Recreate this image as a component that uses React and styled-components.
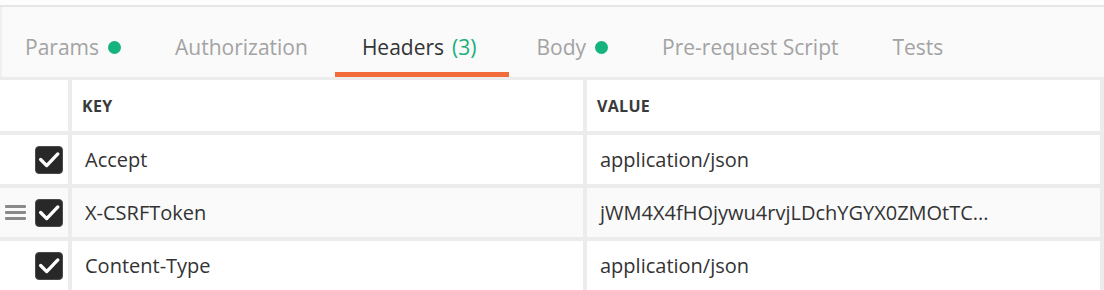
import React from 'react';
import styled, { createGlobalStyle } from 'styled-components';

const GlobalStyle = createGlobalStyle`
  html, body {
    margin: 0;
    padding: 0;
    background: #ffffff;
  }
  body {
    font-family: 'Open Sans', 'Liberation Sans', sans-serif;
    color: #333;
  }
  * {
    box-sizing: border-box;
  }
`;

const Page = styled.div`
  width: 1104px;
  height: 290px;
  overflow: hidden;
  background: #fdfdfd;
  padding-top: 5px;
`;

const TabBar = styled.div`
  display: flex;
  height: 72px;
  background: #fafafa;
  border-top: 2px solid #e6e6e6;
  box-shadow: inset 3px 0 3px -2px rgba(0, 0, 0, 0.08);
`;

const Tab = styled.div`
  display: flex;
  align-items: center;
  height: 70px;
  padding: 14px 27px 0;
  border-bottom: 5px solid ${(p) => (p.active ? '#f26b3a' : 'transparent')};
  font-size: 21px;
  color: ${(p) => (p.active ? '#333333' : '#a3a3a3')};
  white-space: nowrap;
  cursor: pointer;
  &:first-child {
    margin-left: -2px;
  }
`;

const Dot = styled.span`
  width: 13px;
  height: 13px;
  border-radius: 50%;
  background: #15b37d;
  margin-left: 9px;
  margin-top: 2px;
`;

const Count = styled.span`
  color: #18b07c;
  margin-left: 8px;
  margin-right: 6px;
`;

const Table = styled.div`
  display: grid;
  grid-template-columns: 68px 511px 1fr;
  grid-auto-rows: 49px;
  grid-template-rows: 51px;
  gap: 4px;
  background: #ececec;
  padding: 3px 4px 0 0;
`;

const Cell = styled.div`
  display: flex;
  align-items: center;
  background: ${(p) => (p.hover ? '#fafafa' : '#ffffff')};
  padding-left: 13px;
  font-size: 20px;
  color: #333;
  white-space: nowrap;
  overflow: hidden;
`;

const HeadCell = styled(Cell)`
  padding-left: 10px;
  font-size: 16px;
  font-weight: 700;
  letter-spacing: 0.3px;
  text-transform: uppercase;
  color: #3a3a3a;
`;

const ToggleCell = styled.div`
  display: flex;
  align-items: center;
  justify-content: flex-end;
  gap: 9px;
  padding-right: 5px;
  background: ${(p) => (p.hover ? '#fafafa' : '#ffffff')};
`;

const Handle = styled.div`
  display: flex;
  flex-direction: column;
  gap: 3px;
  width: 21px;
  span {
    display: block;
    height: 3px;
    border-radius: 1px;
    background: #8a8a8a;
  }
`;

const CheckBox = styled.div`
  width: 28px;
  height: 28px;
  border-radius: 4px;
  background: #282828;
  border: 1px solid #4a4a4a;
  display: flex;
  align-items: center;
  justify-content: center;
`;

const Check = () => (
  <CheckBox>
    <svg width="28" height="28" viewBox="0 0 28 28">
      <path
        d="M5 13.5 L11.5 20 L23.5 7.5"
        fill="none"
        stroke="#ffffff"
        strokeWidth="3.6"
        strokeLinecap="round"
        strokeLinejoin="round"
      />
    </svg>
  </CheckBox>
);

const tabs = [
  { label: 'Params', dot: true },
  { label: 'Authorization' },
  { label: 'Headers', count: 3, active: true },
  { label: 'Body', dot: true },
  { label: 'Pre-request Script' },
  { label: 'Tests' }
];

const headers = [
  { key: 'Accept', value: 'application/json' },
  { key: 'X-CSRFToken', value: 'jWM4X4fHOjywu4rvjLDchYGYX0ZMOtTC...', hover: true },
  { key: 'Content-Type', value: 'application/json' }
];

export default function App() {
  return (
    <>
      <GlobalStyle />
      <Page>
        <TabBar>
          {tabs.map((t) => (
            <Tab key={t.label} active={t.active}>
              {t.label}
              {t.dot && <Dot />}
              {t.count && <Count>({t.count})</Count>}
            </Tab>
          ))}
        </TabBar>
        <Table>
          <ToggleCell />
          <HeadCell>Key</HeadCell>
          <HeadCell>Value</HeadCell>
          {headers.map((h) => (
            <React.Fragment key={h.key}>
              <ToggleCell hover={h.hover}>
                {h.hover && (
                  <Handle>
                    <span />
                    <span />
                    <span />
                  </Handle>
                )}
                <Check />
              </ToggleCell>
              <Cell hover={h.hover}>{h.key}</Cell>
              <Cell hover={h.hover}>{h.value}</Cell>
            </React.Fragment>
          ))}
        </Table>
      </Page>
    </>
  );
}
